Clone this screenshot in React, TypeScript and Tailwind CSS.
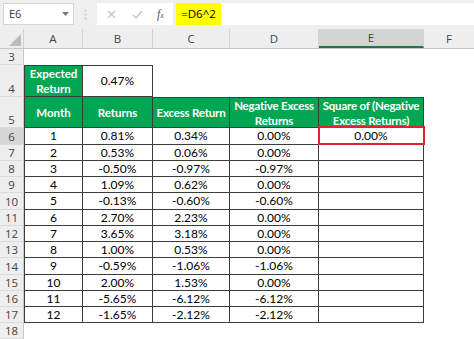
import React from "react";

const cols = "grid grid-rows-1 grid-cols-[24px_59px_70px_77px_89px_105px_1fr]";
const line = "border-[#3c3c3c]";

const data: [string, string, string, string][] = [
  ["1", "0.81%", "0.34%", "0.00%"],
  ["2", "0.53%", "0.06%", "0.00%"],
  ["3", "-0.50%", "-0.97%", "-0.97%"],
  ["4", "1.09%", "0.62%", "0.00%"],
  ["5", "-0.13%", "-0.60%", "-0.60%"],
  ["6", "2.70%", "2.23%", "0.00%"],
  ["7", "3.65%", "3.18%", "0.00%"],
  ["8", "1.00%", "0.53%", "0.00%"],
  ["9", "-0.59%", "-1.06%", "-1.06%"],
  ["10", "2.00%", "1.53%", "0.00%"],
  ["11", "-5.65%", "-6.12%", "-6.12%"],
  ["12", "-1.65%", "-2.12%", "-2.12%"],
];

function RowNum({ n, active }: { n: number; active?: boolean }) {
  return (
    <div
      className={`flex items-end justify-center border-r border-b border-r-[#c8c8c8] border-b-[#dadada] pb-[2px] font-['Open_Sans',sans-serif] text-[11.5px] font-normal leading-none text-[#444] ${
        active ? "bg-[#d6d6d6]" : "bg-[#eeeeee]"
      }`}
    >
      {n}
    </div>
  );
}

export default function App() {
  return (
    <div className="h-[339px] w-[474px] overflow-hidden bg-white font-['Lato',sans-serif] text-black">
      {/* formula bar */}
      <div className="flex h-[29px] items-start bg-[#efefef] pt-[3px] font-['Open_Sans',sans-serif]">
        <div className="ml-[3px] flex h-[22px] w-[71px] items-center justify-between border border-[#d6d6d6] bg-white pl-[5px] pr-[4px] text-[11px] text-[#333]">
          <span>E6</span>
          <svg width="7" height="4" viewBox="0 0 7 4">
            <path d="M0 0h7L3.5 4z" fill="#777" />
          </svg>
        </div>
        <div className="flex h-[22px] w-[23px] items-center justify-center">
          <svg width="3" height="11" viewBox="0 0 3 11">
            <circle cx="1.5" cy="1.5" r="1" fill="#c8c8c8" />
            <circle cx="1.5" cy="5.5" r="1" fill="#c8c8c8" />
            <circle cx="1.5" cy="9.5" r="1" fill="#c8c8c8" />
          </svg>
        </div>
        <div className="flex h-[22px] w-[76px] items-center bg-white">
          <svg className="ml-[10px]" width="9" height="9" viewBox="0 0 9 9">
            <path d="M1 1l7 7M8 1L1 8" stroke="#c2c2c2" strokeWidth="1.2" />
          </svg>
          <svg className="ml-[16px]" width="11" height="9" viewBox="0 0 11 9">
            <path d="M1 5l3 3 6-7" stroke="#c2c2c2" strokeWidth="1.2" fill="none" />
          </svg>
          <span className="ml-[14px] font-['Liberation_Serif',serif] text-[12px] italic text-[#555]">
            f<span className="text-[8px]">x</span>
          </span>
        </div>
        <div className="ml-[3px] flex h-[22px] flex-1 items-stretch bg-white">
          <div className="flex w-[45px] items-center justify-center bg-[#ffff00] text-[11.5px] text-black">
            =D6^2
          </div>
        </div>
      </div>

      {/* column headers */}
      <div
        className={`${cols} h-[20px] border-b border-[#c6c6c6] bg-[#eeeeee] font-['Open_Sans',sans-serif] text-[11.5px] text-[#444]`}
      >
        <div className="relative border-r border-[#d2d2d2]">
          <svg className="absolute bottom-[2px] right-[2px]" width="12" height="12" viewBox="0 0 12 12">
            <path d="M12 0V12H0z" fill="#bcbcbc" />
          </svg>
        </div>
        {["A", "B", "C", "D"].map((c) => (
          <div key={c} className="flex items-center justify-center border-r border-[#d2d2d2]">
            {c}
          </div>
        ))}
        <div className="flex items-center justify-center border-r border-b-2 border-r-[#d2d2d2] border-b-[#217346] bg-[#d4d4d4]">
          E
        </div>
        <div className="flex items-center justify-center">F</div>
      </div>

      {/* row 3 */}
      <div className={`${cols} h-[16px]`}>
        <RowNum n={3} />
      </div>

      {/* row 4 */}
      <div className={`${cols} h-[32px]`}>
        <RowNum n={4} />
        <div
          className={`flex flex-col items-center justify-center border bg-[#00a651] text-[11.5px] font-bold leading-[15px] text-white ${line}`}
        >
          <span>Expected</span>
          <span>Return</span>
        </div>
        <div className={`flex items-center justify-center border-t border-r border-b text-[12px] ${line}`}>
          0.47%
        </div>
      </div>

      {/* row 5 headers */}
      <div className={`${cols} h-[31px] text-[11.5px] font-bold leading-[15px] text-white`}>
        <RowNum n={5} />
        <div className={`flex items-center justify-center border-x border-b bg-[#00a651] ${line}`}>Month</div>
        <div className={`flex items-center justify-center border-r border-b bg-[#00a651] ${line}`}>Returns</div>
        <div className={`flex items-center justify-center border-t border-r border-b bg-[#00a651] tracking-[-0.2px] ${line}`}>
          Excess Return
        </div>
        <div className={`flex flex-col items-center justify-center border-t border-r border-b bg-[#00a651] tracking-[-0.2px] ${line}`}>
          <span>Negative Excess</span>
          <span>Returns</span>
        </div>
        <div className={`flex flex-col items-center justify-center border-t border-r border-b bg-[#00a651] tracking-[-0.2px] ${line}`}>
          <span>Square of (Negative</span>
          <span>Excess Returns)</span>
        </div>
      </div>

      {/* data rows */}
      {data.map((r, i) => (
        <div key={i} className={`${cols} ${i % 4 === 0 ? "h-[17px]" : "h-[16px]"} text-[12px] leading-none`}>
          <RowNum n={i + 6} active={i === 0} />
          <div className={`flex items-center justify-center border-x border-b ${line}`}>{r[0]}</div>
          <div className={`flex items-center justify-center border-r border-b ${line}`}>{r[1]}</div>
          <div className={`flex items-center justify-center border-r border-b ${line}`}>{r[2]}</div>
          <div className={`flex items-center justify-center border-r border-b ${line}`}>{r[3]}</div>
          <div className={`relative flex items-center justify-center border-r border-b ${line}`}>
            {i === 0 && (
              <>
                0.00%
                <div className="absolute -top-[2px] -left-px -right-[2px] -bottom-px border-2 border-[#e3202b]" />
              </>
            )}
          </div>
        </div>
      ))}

      {/* row 18 */}
      <div className={`${cols} h-[16px]`}>
        <RowNum n={18} />
      </div>
    </div>
  );
}
